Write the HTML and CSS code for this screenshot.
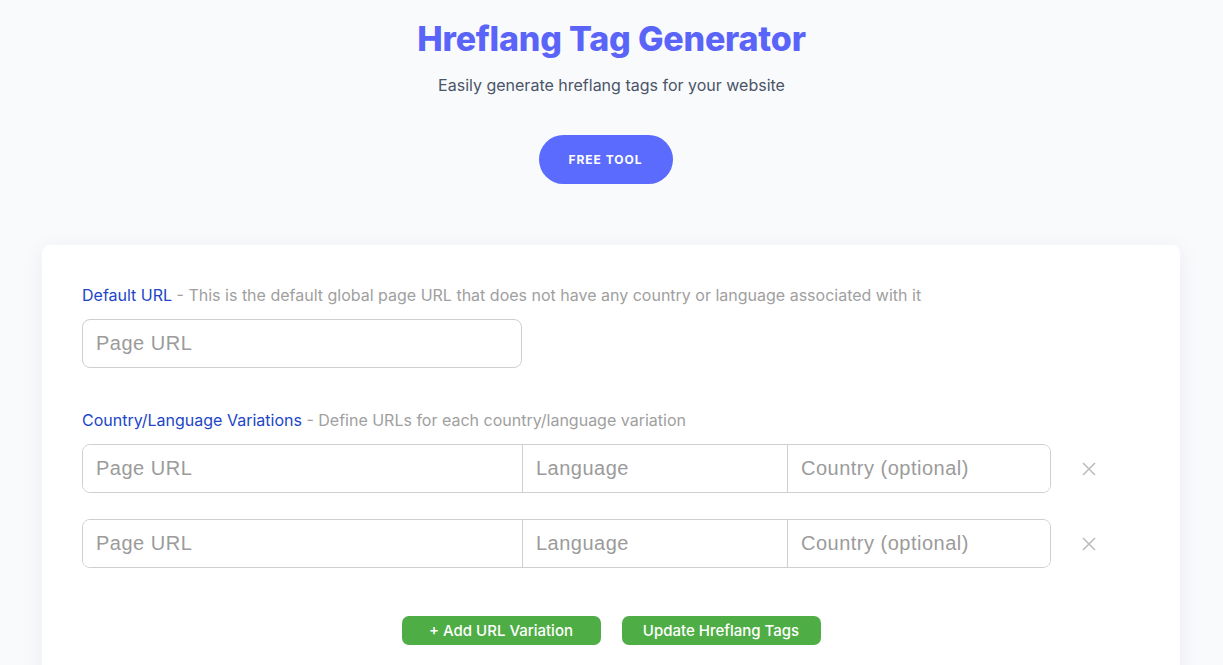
FILE: index.html
```html
<!DOCTYPE html>
<html lang="en">
<head>
<meta charset="utf-8">
<title>Hreflang Tag Generator</title>
<link rel="stylesheet" href="styles.css">
</head>
<body>
<header class="hero">
  <h1 class="title">Hreflang Tag Generator</h1>
  <p class="subtitle">Easily generate hreflang tags for your website</p>
  <a class="pill" href="#">FREE TOOL</a>
</header>
<main class="card">
  <section class="group">
    <div class="label"><span class="label-key">Default URL</span> - This is the default global page URL that does not have any country or language associated with it</div>
    <input class="field field-single" type="text" placeholder="Page URL">
  </section>
  <section class="group group-variations">
    <div class="label"><span class="label-key">Country/Language Variations</span> - Define URLs for each country/language variation</div>
    <div class="row">
      <div class="combo">
        <input class="field-part part-url" type="text" placeholder="Page URL">
        <input class="field-part part-lang" type="text" placeholder="Language">
        <input class="field-part part-country" type="text" placeholder="Country (optional)">
      </div>
      <button class="remove" type="button" aria-label="Remove">
        <svg width="16" height="16" viewBox="0 0 16 16"><path d="M2 2L14 14M14 2L2 14" stroke="#bdbdbd" stroke-width="1.6" fill="none"/></svg>
      </button>
    </div>
    <div class="row">
      <div class="combo">
        <input class="field-part part-url" type="text" placeholder="Page URL">
        <input class="field-part part-lang" type="text" placeholder="Language">
        <input class="field-part part-country" type="text" placeholder="Country (optional)">
      </div>
      <button class="remove" type="button" aria-label="Remove">
        <svg width="16" height="16" viewBox="0 0 16 16"><path d="M2 2L14 14M14 2L2 14" stroke="#bdbdbd" stroke-width="1.6" fill="none"/></svg>
      </button>
    </div>
  </section>
  <div class="actions">
    <button class="btn" type="button">+ Add URL Variation</button>
    <button class="btn" type="button">Update Hreflang Tags</button>
  </div>
</main>
</body>
</html>
```
FILE: styles.css
```css
* { box-sizing: border-box; }
html, body { margin: 0; padding: 0; }
body {
  background: #f9fafc;
  font-family: Inter, "Noto Sans", sans-serif;
  color: #4a5568;
  overflow: hidden;
}
.hero {
  display: flex;
  flex-direction: column;
  align-items: center;
  padding-top: 19px;
}
.title {
  margin: 0;
  font-size: 34px;
  line-height: 40px;
  font-weight: 800;
  color: #5b64f8;
  letter-spacing: -0.2px;
}
.subtitle {
  margin: 14px 0 0;
  font-size: 16px;
  line-height: 24px;
  color: #4a5568;
}
.pill {
  margin: 38px 12px 0 0;
  width: 134px;
  height: 49px;
  border-radius: 25px;
  background: #5a6bfd;
  color: #fff;
  text-decoration: none;
  font-size: 12px;
  font-weight: 700;
  letter-spacing: 1px;
  display: flex;
  align-items: center;
  justify-content: center;
}
.card {
  width: 1138px;
  margin: 61px 0 0 42px;
  background: #fff;
  border-radius: 8px;
  box-shadow: 0 4px 24px rgba(30, 40, 90, 0.06);
  padding: 40px 40px 40px;
  min-height: 500px;
}
.label {
  font-size: 16px;
  line-height: 20px;
  color: #a0a0a0;
}
.label-key { color: #2145c8; }
.field {
  display: block;
  margin-top: 14px;
  width: 440px;
  height: 49px;
  border: 1px solid #cfcfcf;
  border-radius: 8px;
  padding: 0 13px;
  font-family: "Liberation Sans", Arial, sans-serif;
  font-size: 20px;
  letter-spacing: 0.5px;
  color: #333;
  background: #fff;
  outline: none;
}
.group-variations { margin-top: 42px; }
.row {
  display: flex;
  align-items: center;
  margin-top: 14px;
}
.row + .row { margin-top: 26px; }
.combo {
  display: flex;
  width: 969px;
  height: 49px;
  border: 1px solid #cfcfcf;
  border-radius: 8px;
  overflow: hidden;
}
.field-part {
  height: 100%;
  border: 0;
  border-right: 1px solid #cfcfcf;
  padding: 0 13px;
  font-family: "Liberation Sans", Arial, sans-serif;
  font-size: 20px;
  letter-spacing: 0.5px;
  color: #333;
  background: #fff;
  outline: none;
  min-width: 0;
}
.field-part:last-child { border-right: 0; }
.part-url { width: 440px; }
.part-lang { width: 265px; }
.part-country { flex: 1; }
input::placeholder { color: #9b9b9b; opacity: 1; }
.remove {
  margin-left: 30px;
  width: 16px;
  height: 16px;
  padding: 0;
  border: 0;
  background: none;
  display: flex;
}
.actions {
  display: flex;
  justify-content: center;
  gap: 21px;
  margin-top: 48px;
}
.btn {
  width: 199px;
  height: 29px;
  border: 0;
  border-radius: 7px;
  background: #4fad46;
  color: #fff;
  font-family: Inter, "Noto Sans", sans-serif;
  font-size: 15px;
  font-weight: 500;
  padding: 0;
}
```
